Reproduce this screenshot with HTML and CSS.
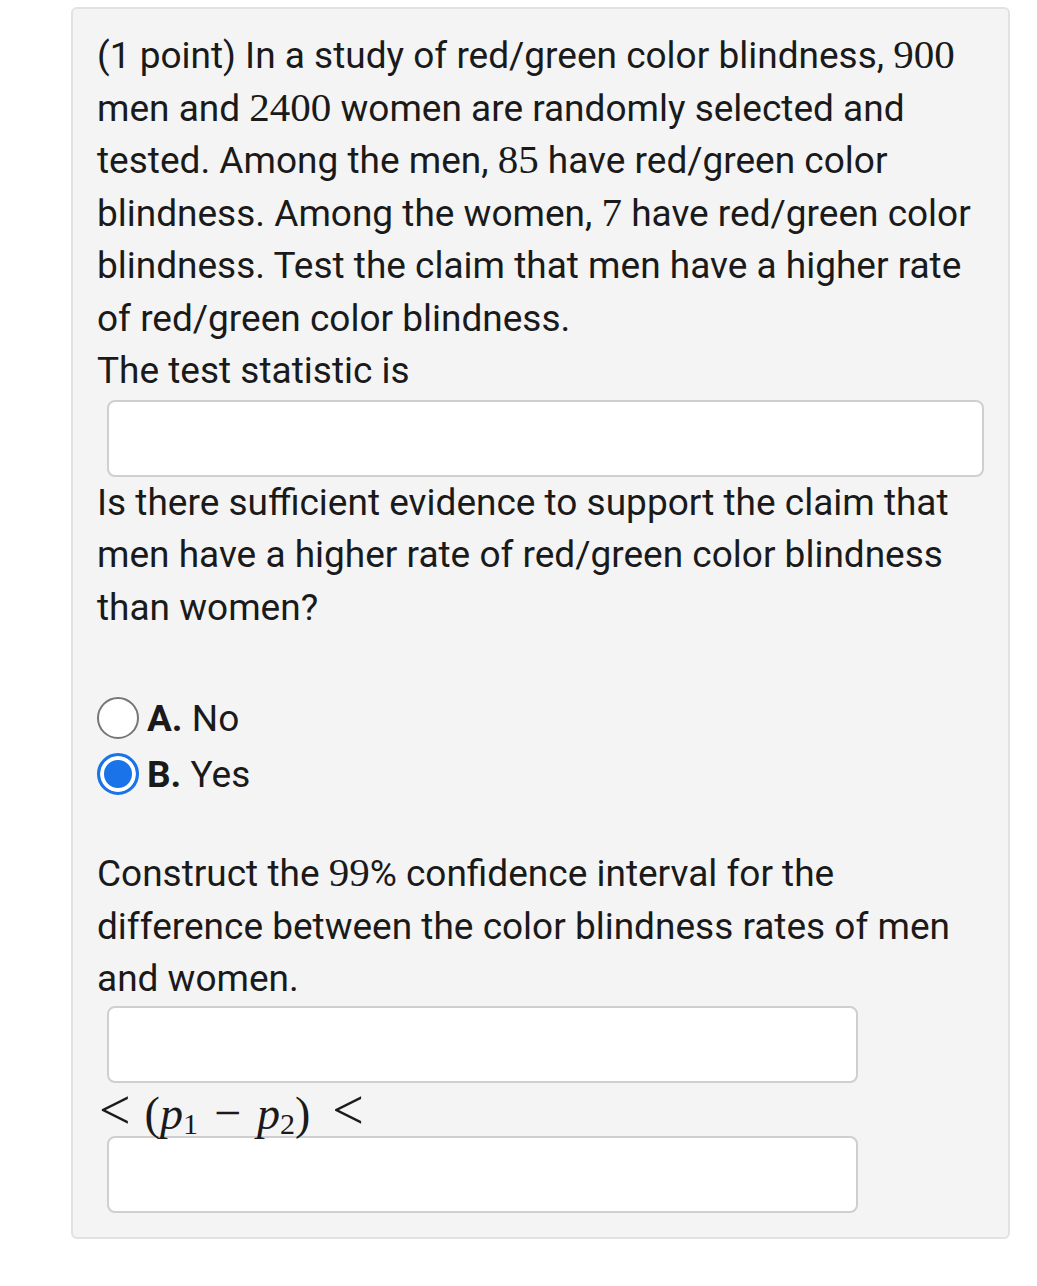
FILE: index.html
```html
<!DOCTYPE html>
<html lang="en">

<head>
  <meta charset="UTF-8">
  <title>Problem</title>
  <link rel="stylesheet" href="styles.css">
</head>

<body>
  <div class="problem">
    <p class="text">
      (1 point) In a study of red/green color blindness, <span class="m">900</span>
      men and <span class="m">2400</span> women are randomly selected and
      tested. Among the men, <span class="m">85</span> have red/green color
      blindness. Among the women, <span class="m">7</span> have red/green color
      blindness. Test the claim that men have a higher rate
      of red/green color blindness.<br>
      The test statistic is
    </p>
    <div class="answer wide"></div>

    <p class="text">
      Is there sufficient evidence to support the claim that
      men have a higher rate of red/green color blindness
      than women?
    </p>

    <!-- Choices -->
    <div class="choices">
      <label class="choice">
        <span class="radio"></span>
        <span><b>A.</b> No</span>
      </label>
      <label class="choice">
        <span class="radio checked"></span>
        <span><b>B.</b> Yes</span>
      </label>
    </div>

    <p class="text">
      Construct the <span class="m">99</span>% confidence interval for the
      difference between the color blindness rates of men
      and women.
    </p>
    <div class="answer short"></div>
    <div class="math-line">
      <span class="rel">&lt;</span><span class="paren">(</span><i>p</i><sub>1</sub><span class="op">&minus;</span><i>p</i><sub>2</sub><span class="paren">)</span><span class="rel">&lt;</span>
    </div>
    <div class="answer short"></div>
  </div>
</body>

</html>
```

FILE: styles.css
```css
* {
  margin: 0;
  padding: 0;
  box-sizing: border-box;
}

body {
  font-family: Roboto, 'Liberation Sans', sans-serif;
  background: #fff;
  color: #1a1a1a;
}

.problem {
  margin: 7px 27px 0 71px;
  background: #f4f4f4;
  border: 2px solid #e2e2e2;
  border-radius: 6px;
  padding: 21px 24px 24px 24px;
}

.text {
  font-size: 37px;
  line-height: 52.5px;
}

.m {
  font-family: 'Liberation Serif', 'DejaVu Serif', serif;
  font-size: 41px;
  line-height: 1;
}

.answer {
  background: #fff;
  border: 2px solid #cfcfcf;
  border-radius: 8px;
  height: 77px;
  margin-left: 10px;
}

.answer.wide {
  margin-top: 2px;
}

.answer.short {
  width: 751px;
}

.choices {
  margin: 63px 0 53px 0;
  display: flex;
  flex-direction: column;
  gap: 14px;
}

.choice {
  display: flex;
  align-items: center;
  gap: 8px;
  font-size: 37px;
  height: 42px;
}

.radio {
  width: 42px;
  height: 42px;
  border: 2px solid #767676;
  border-radius: 50%;
  background: #fff;
}

.radio.checked {
  border: 3px solid #1a73e8;
  background: #1a73e8;
  box-shadow: inset 0 0 0 4px #fff;
}

/* < (p1 - p2) < */
.math-line {
  height: 53px;
  line-height: 55px;
  font-family: 'Liberation Serif', 'DejaVu Serif', serif;
  font-size: 44px;
  white-space: nowrap;
}

.math-line i {
  font-size: 46px;
}

.math-line .rel {
  font-size: 56px;
}

.math-line .rel:first-child {
  margin: 0 14px 0 2px;
}

.math-line .rel:last-child {
  margin-left: 22px;
}

.math-line .paren {
  font-size: 46px;
}

.math-line .op {
  font-size: 48px;
  margin: 0 16px;
}

.math-line sub {
  font-size: 30px;
  vertical-align: -5px;
  line-height: 0;
}
```
